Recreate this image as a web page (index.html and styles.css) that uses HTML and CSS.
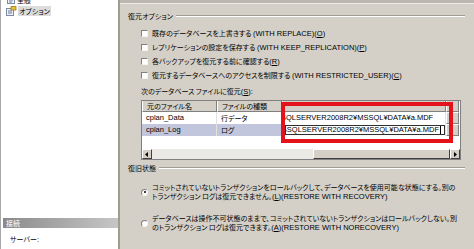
FILE: index.html
```html
<!DOCTYPE html>
<html lang="ja">
<head>
    <meta charset="utf-8">
    <title>データベースの復元 - オプション</title>
    <link rel="stylesheet" href="styles.css">
</head>
<body>
<div class="window">
    <div class="sidebar">
        <ul class="tree">
            <li class="tree-item">
                <svg class="page-icon" width="10" height="9" viewBox="0 0 10 9">
                    <rect x="1.5" y="0.5" width="7" height="8" fill="#eef2f8" stroke="#7d8aa6"/>
                    <path d="M3 3h4M3 5h4M3 7h3" stroke="#6a7896" stroke-width="1"/>
                </svg>
                <span>全般</span>
            </li>
            <li class="tree-item">
                <svg class="page-icon" width="11" height="10" viewBox="0 0 11 10">
                    <rect x="0.5" y="2.5" width="7" height="7" fill="#eef2f8" stroke="#7d8aa6"/>
                    <path d="M2 5h4M2 7h4" stroke="#6a7896" stroke-width="1"/>
                    <path d="M5 0.5h5v3.5h-5z" fill="#e6c23a" stroke="#9a7a10" stroke-width="0.8"/>
                </svg>
                <span class="selected">オプション</span>
            </li>
        </ul>
        <div class="conn-header">接続</div>
        <div class="conn-row">サーバー<span class="en">:</span></div>
    </div>

    <div class="main">
        <div class="toolbar"></div>
        <div class="page">
            <div class="group-title"><span>復元オプション</span></div>
            <div class="options">
                <div class="check"><span class="box"></span><span>既存のデータベースを上書きする <span class="en">(WITH REPLACE)(<u>O</u>)</span></span></div>
                <div class="check"><span class="box"></span><span>レプリケーションの設定を保存する <span class="en">(WITH KEEP_REPLICATION)(<u>P</u>)</span></span></div>
                <div class="check"><span class="box"></span><span>各バックアップを復元する前に確認する<span class="en">(<u>R</u>)</span></span></div>
                <div class="check"><span class="box"></span><span>復元するデータベースへのアクセスを制限する <span class="en">(WITH RESTRICTED_USER)(<u>C</u>)</span></span></div>
            </div>

            <div class="files-label">次のデータベース ファイルに復元<span class="en">(<u>S</u>):</span></div>
            <div class="grid-wrap">
                <div class="grid-row grid-head">
                    <div class="cell c1">元のファイル名</div>
                    <div class="cell c2">ファイルの種類</div>
                    <div class="cell c3"></div>
                    <div class="cell c4"></div>
                </div>
                <div class="grid-row">
                    <div class="cell c1 en">cplan_Data</div>
                    <div class="cell c2">行データ</div>
                    <div class="cell c3 en"><span class="scrolled">SQLSERVER2008R2¥MSSQL¥DATA¥a.MDF</span></div>
                    <div class="cell c4 btn"></div>
                </div>
                <div class="grid-row selected-row">
                    <div class="cell c1 en">cplan_Log</div>
                    <div class="cell c2">ログ</div>
                    <div class="cell c3 editing en"><div class="edit-box"><span>0_50.MSSQLSERVER2008R2¥MSSQL¥DATA¥a.MDF</span><i class="caret"></i></div></div>
                    <div class="cell c4 btn"></div>
                </div>
                <div class="grid-empty"></div>
                <div class="hscroll">
                    <div class="arrow"><svg width="4" height="5" viewBox="0 0 4 5"><path d="M3 0v5L0 2.5z" fill="#000"/></svg></div>
                    <div class="track"></div>
                    <div class="thumb"></div>
                    <div class="arrow"><svg width="4" height="5" viewBox="0 0 4 5"><path d="M1 0v5L4 2.5z" fill="#000"/></svg></div>
                </div>
                <div class="highlight"></div>
            </div>

            <div class="group-title recovery"><span>復旧状態</span></div>
            <div class="radios">
                <div class="radio first">
                    <span class="dot checked"></span>
                    <span>コミットされていないトランザクションをロールバックして、データベースを使用可能な状態にする。別の<br>トランザクション ログは復元できません。<span class="en">(<u>L</u>)(RESTORE WITH RECOVERY)</span></span>
                </div>
                <div class="radio second">
                    <span class="dot"></span>
                    <span>データベースは操作不可状態のままで、コミットされていないトランザクションはロールバックしない。別<br>のトランザクション ログは復元できます。<span class="en">(<u>A</u>)(RESTORE WITH NORECOVERY)</span></span>
                </div>
            </div>
        </div>
    </div>
</div>
</body>
</html>
```

FILE: styles.css
```css
body {
    margin: 0;
    font-family: "Noto Sans CJK JP", sans-serif;
    font-feature-settings: "palt";
    font-size: 7px;
    color: #000;
    background-color: #d4d0c8;
}

.en {
    font-family: "Liberation Sans", Arial, sans-serif;
    font-size: 7.5px;
}

.window {
    display: flex;
    width: 474px;
    height: 249px;
    overflow: hidden;
}

/* left pane */
.sidebar {
    flex-shrink: 0;
    width: 117px;
    background-color: #fff;
    border-left: 1px solid #a8a8a8;
    border-right: 2px solid #a09c94;
    display: flex;
    flex-direction: column;
}

.tree {
    list-style: none;
    margin: -6px 0 0 0;
    padding: 0 0 0 5px;
    flex: 1;
}

.tree-item {
    display: flex;
    align-items: center;
    height: 11px;
    gap: 1px;
    white-space: nowrap;
}

.tree-item .selected {
    background-color: #dcdcdc;
    padding: 0 1px;
}

.conn-header {
    height: 10px;
    line-height: 10px;
    margin-left: 2px;
    padding-left: 3px;
    color: #fff;
    background: linear-gradient(to right, #8a8a8a, #c6c6c6);
}

.conn-row {
    height: 21px;
    box-sizing: border-box;
    padding: 6px 0 0 9px;
}

/* right pane */
.main {
    flex: 1;
    min-width: 0;
    display: flex;
    flex-direction: column;
}

.toolbar {
    height: 3px;
    background-color: #bcb8b0;
    border-bottom: 1px solid #eeece8;
}

.page {
    flex: 1;
    padding: 7px 9px 0 8px;
}

.group-title {
    display: flex;
    align-items: center;
    gap: 3px;
    height: 10px;
    line-height: 10px;
}

.group-title::after {
    content: "";
    flex: 1;
    border-top: 1px solid #a09c94;
    border-bottom: 1px solid #fff;
}

.options {
    margin: 5px 0 0 13px;
}

.check {
    display: flex;
    align-items: center;
    gap: 4px;
    height: 14px;
    white-space: nowrap;
}

.box {
    width: 5px;
    height: 5px;
    background-color: #fff;
    border: 1px solid;
    border-color: #808080 #f4f4f4 #f4f4f4 #808080;
}

.files-label {
    margin: 4px 0 0 13px;
    height: 10px;
    line-height: 10px;
}

/* file grid */
.grid-wrap {
    position: relative;
    margin: 4px 0 0 13px;
    width: 318px;
    border: 1px solid #808080;
    background-color: #fff;
}

.grid-row {
    display: flex;
    height: 12px;
}

.cell {
    box-sizing: border-box;
    padding-left: 4px;
    line-height: 12px;
    overflow: hidden;
    white-space: nowrap;
    border-right: 1px solid #e4e2de;
}

.c1 { width: 75px; }
.c2 { width: 65px; }
.c3 { width: 164px; padding-left: 1px; }
.c4 { width: 13px; padding: 0; }

.grid-head {
    height: 11px;
}

.grid-head .cell {
    line-height: 10px;
    background-color: #d4d0c8;
    border-right: 1px solid #808080;
    border-bottom: 1px solid #808080;
    border-left: 1px solid #fff;
}

.scrolled {
    display: inline-block;
    margin-left: -2px;
}

.btn {
    background-color: #d4d0c8;
    border: 1px solid;
    border-color: #fff #808080 #808080 #fff;
}

.selected-row .c1,
.selected-row .c2 {
    background-color: #c2c6dc;
}

.editing {
    padding: 1px 0 1px 3px;
}

.edit-box {
    display: flex;
    justify-content: flex-end;
    align-items: center;
    height: 10px;
    overflow: hidden;
    border: 1px solid #303030;
    box-sizing: border-box;
    padding-right: 3px;
    background-color: #fff;
}

.edit-box span {
    white-space: nowrap;
}

.caret {
    width: 1px;
    height: 8px;
    margin-left: 1px;
    background-color: #000;
    flex-shrink: 0;
}

.grid-empty {
    height: 13px;
}

.hscroll {
    display: flex;
    height: 10px;
}

.hscroll .arrow {
    width: 10px;
    box-sizing: border-box;
    display: flex;
    align-items: center;
    justify-content: center;
    background-color: #d4d0c8;
    border: 1px solid;
    border-color: #fff #404040 #404040 #fff;
}

.hscroll .track {
    flex: 1;
    background-color: #ebe9e5;
}

.hscroll .thumb {
    width: 137px;
    box-sizing: border-box;
    background-color: #d4d0c8;
    border: 1px solid;
    border-color: #fff #404040 #404040 #fff;
}

.highlight {
    position: absolute;
    left: 139px;
    top: 1px;
    width: 172px;
    height: 41px;
    box-sizing: border-box;
    border: 4px solid #e3121b;
}

/* recovery state */
.recovery {
    margin-top: 3px;
}

.radios {
    margin-left: 13px;
}

.radio {
    display: flex;
    align-items: center;
    gap: 4px;
    line-height: 9px;
    white-space: nowrap;
}

.radio.first {
    margin-top: 10px;
}

.radio.second {
    margin-top: 13px;
}

.dot {
    width: 5px;
    height: 5px;
    border-radius: 50%;
    background-color: #fff;
    border: 1px solid;
    border-color: #808080 #f4f4f4 #f4f4f4 #808080;
    display: flex;
    align-items: center;
    justify-content: center;
}

.dot.checked::after {
    content: "";
    width: 2px;
    height: 2px;
    border-radius: 50%;
    background-color: #000;
}
```
